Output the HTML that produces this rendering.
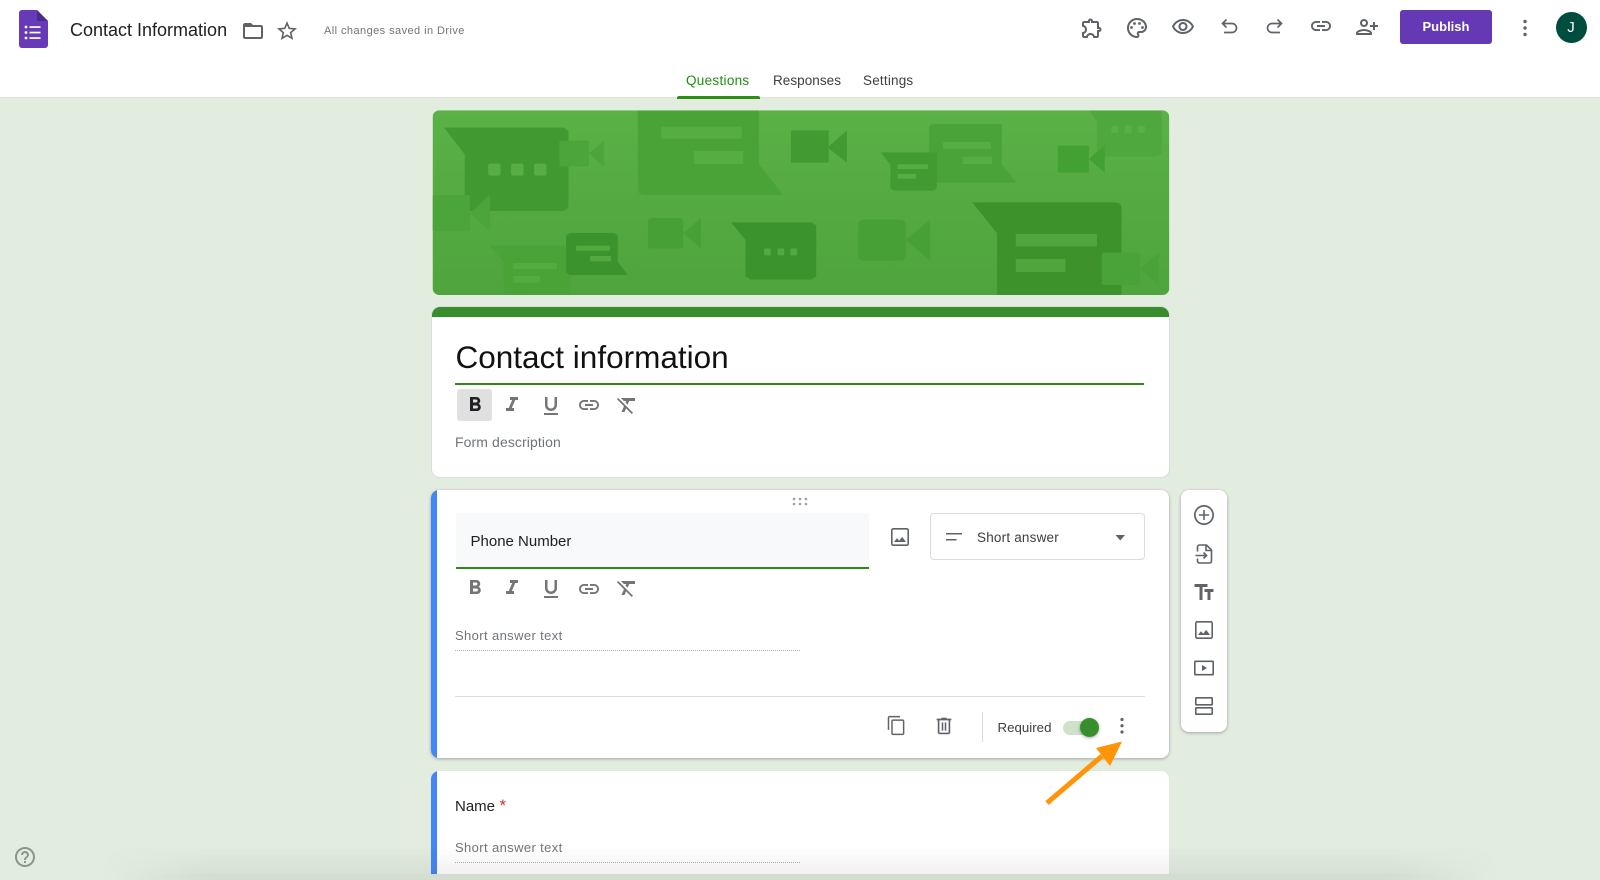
<!DOCTYPE html>
<html><head><meta charset="utf-8"><title>Contact Information</title>
<style>
html,body{margin:0;padding:0;width:1600px;height:880px;overflow:hidden}
body{background:#e2ede0;font-family:"Liberation Sans",sans-serif;color:#202124}
#p{position:relative;width:1600px;height:880px;overflow:hidden;background:#e2ede0}
.a{position:absolute}
.t{position:absolute;white-space:nowrap;line-height:20px}
svg.i{position:absolute;width:24px;height:24px;fill:#5f6368}
svg.g{fill:#757575}
svg.s{fill:none;stroke:#5f6368;stroke-width:1.6}
.card{position:absolute;background:#fff;border-radius:8px;box-sizing:border-box}
</style></head>
<body><div id="p">
<!-- header -->
<div class="a" style="left:0;top:0;width:1600px;height:98px;background:#fff;border-bottom:1px solid #dde3dc;box-sizing:border-box"></div>
<svg class="a" style="left:19px;top:10px" width="29" height="38" viewBox="0 0 29 38"><path d="M3 0H18L29 11V35a3 3 0 0 1-3 3H3a3 3 0 0 1-3-3V3a3 3 0 0 1 3-3z" fill="#673ab7"/><path d="M18 0L29 11H18z" fill="#4b2a8f"/><g fill="#fff"><circle cx="7" cy="17" r="1.4"/><circle cx="7" cy="22.5" r="1.4"/><circle cx="7" cy="28" r="1.4"/><rect x="10.5" y="16.200" width="11" height="1.700"/><rect x="10.5" y="21.700" width="11" height="1.700"/><rect x="10.5" y="27.200" width="11" height="1.700"/></g></svg>
<div class="t" style="left:70px;top:20px;font-size:18px;color:#202124">Contact Information</div>
<svg class="i" style="left:241px;top:19px" viewBox="0 0 24 24"><path d="M20 6h-8l-2-2H4c-1.100 0-2 .9-2 2v12c0 1.100.9 2 2 2h16c1.100 0 2-.9 2-2V8c0-1.100-.9-2-2-2zm0 12H4V8h16v10z"/></svg>
<svg class="i" style="left:275px;top:19px" viewBox="0 0 24 24"><path d="M22 9.240l-7.190-.62L12 2 9.190 8.630 2 9.240l5.460 4.730L5.820 21 12 17.270 18.180 21l-1.630-7.030L22 9.240zM12 15.400l-3.760 2.270 1-4.280-3.320-2.880 4.380-.38L12 6.100l1.710 4.040 4.380.38-3.320 2.880 1 4.280L12 15.400z"/></svg>
<div class="t" style="left:324px;top:21px;font-size:11px;letter-spacing:.43px;color:#70757a">All changes saved in Drive</div>

<svg class="i" style="left:1080px;top:16px" viewBox="0 0 24 24"><path d="M10.500 4.500c.28 0 .5.22.5.5v2h6v6h2c.28 0 .5.22.5.5s-.22.5-.5.5h-2v6h-2.120c-.68-1.750-2.390-3-4.380-3s-3.700 1.250-4.380 3H4v-2.120c1.750-.68 3-2.390 3-4.380 0-1.990-1.240-3.700-2.990-4.380L4 7h6V5c0-.28.22-.5.5-.5m0-2C9.120 2.500 8 3.620 8 5H4c-1.100 0-1.990.9-1.990 2v3.800h.29c1.490 0 2.700 1.210 2.700 2.700s-1.210 2.700-2.700 2.700H2V20c0 1.100.9 2 2 2h3.800v-.3c0-1.490 1.210-2.700 2.700-2.700s2.700 1.210 2.700 2.700v.3H17c1.100 0 2-.9 2-2v-4c1.380 0 2.500-1.120 2.500-2.500S20.380 11 19 11V7c0-1.100-.9-2-2-2h-4c0-1.380-1.120-2.500-2.500-2.500z"/></svg>
<svg class="i" style="left:1125px;top:16px" viewBox="0 0 24 24"><path d="M12 22C6.490 22 2 17.510 2 12S6.490 2 12 2s10 4.040 10 9c0 3.310-2.690 6-6 6h-1.770c-.28 0-.5.22-.5.5 0 .12.05.23.13.33.41.47.64 1.060.64 1.670 0 1.380-1.120 2.500-2.500 2.500zm0-18c-4.410 0-8 3.590-8 8s3.590 8 8 8c.28 0 .5-.22.5-.5 0-.16-.08-.28-.14-.35-.41-.46-.63-1.050-.63-1.650 0-1.380 1.120-2.500 2.500-2.500H16c2.210 0 4-1.790 4-4 0-3.860-3.590-7-8-7z"/><circle cx="6.500" cy="11.500" r="1.400"/><circle cx="9.500" cy="7.500" r="1.400"/><circle cx="14.500" cy="7.500" r="1.400"/><circle cx="17.500" cy="11.500" r="1.400"/></svg>
<svg class="i" style="left:1171px;top:15px" viewBox="0 0 24 24"><path d="M12 6c3.790 0 7.170 2.130 8.820 5.500C19.170 14.870 15.790 17 12 17s-7.170-2.130-8.820-5.500C4.830 8.130 8.210 6 12 6m0-2C7 4 2.730 7.110 1 11.500 2.730 15.890 7 19 12 19s9.270-3.110 11-7.500C21.270 7.110 17 4 12 4zm0 5c1.380 0 2.500 1.120 2.500 2.500S13.380 14 12 14s-2.500-1.120-2.500-2.500S10.620 9 12 9m0-2c-2.480 0-4.500 2.020-4.500 4.500S9.520 16 12 16s4.500-2.020 4.500-4.500S14.480 7 12 7z"/></svg>
<svg class="i" style="left:1217px;top:15px;fill:none;stroke:#5f6368;stroke-width:1.7" viewBox="0 0 24 24"><path d="M9.500 4.500L5.500 8.500l4 4M5.500 8.500H15a4.500 4.500 0 0 1 0 9H7"/></svg>
<svg class="i" style="left:1263px;top:15px;fill:none;stroke:#5f6368;stroke-width:1.7" viewBox="0 0 24 24"><path d="M14.500 4.500l4 4-4 4M18.500 8.500H9a4.500 4.500 0 0 0 0 9h8"/></svg>
<svg class="i" style="left:1309px;top:14px" viewBox="0 0 24 24"><path d="M3.900 12c0-1.710 1.390-3.100 3.100-3.100h4V7H7c-2.760 0-5 2.240-5 5s2.240 5 5 5h4v-1.900H7c-1.710 0-3.100-1.390-3.100-3.100zM8 13h8v-2H8v2zm9-6h-4v1.900h4c1.710 0 3.100 1.390 3.100 3.100s-1.390 3.100-3.100 3.100h-4V17h4c2.760 0 5-2.240 5-5s-2.240-5-5-5z"/></svg>
<svg class="i" style="left:1355px;top:15px;transform:scaleX(-1)" viewBox="0 0 24 24"><path d="M15 12c2.210 0 4-1.790 4-4s-1.790-4-4-4-4 1.790-4 4 1.790 4 4 4zm0-6c1.100 0 2 .9 2 2s-.9 2-2 2-2-.9-2-2 .9-2 2-2zm0 8c-2.670 0-8 1.340-8 4v2h16v-2c0-2.660-5.330-4-8-4zm-6 4c.22-.72 3.310-2 6-2 2.700 0 5.800 1.290 6 2H9zm-3-3v-3h3v-2H6V7H4v3H1v2h3v3h2z"/></svg>
<div class="a" style="left:1400px;top:10px;width:92px;height:34px;background:#6539b4;border-radius:3px;color:#fff;font-weight:700;font-size:13px;line-height:34px;text-align:center">Publish</div>
<svg class="a" style="left:1519px;top:18px" width="12" height="20" fill="#5f6368"><circle cx="6" cy="3.500" r="1.700"/><circle cx="6" cy="10" r="1.700"/><circle cx="6" cy="16.500" r="1.700"/></svg>
<div class="a" style="left:1555.500px;top:12px;width:31px;height:31px;border-radius:50%;background:#004d40;color:#fff;font-size:15px;line-height:31px;text-align:center">J</div>

<!-- tabs -->
<div class="t" style="left:686px;top:71px;font-size:13.500px;color:#1e8e0e;letter-spacing:.3px">Questions</div>
<div class="t" style="left:773px;top:71px;font-size:13.500px;color:#3c4043;letter-spacing:.05px">Responses</div>
<div class="t" style="left:863px;top:71px;font-size:13.500px;color:#3c4043;letter-spacing:.2px">Settings</div>
<div class="a" style="left:676.500px;top:96px;width:83px;height:2.500px;background:#2d9015;border-radius:2px 2px 0 0"></div>

<!-- banner -->
<svg class="a" style="left:425px;top:105px" width="750" height="205" viewBox="0 0 1568 615" preserveAspectRatio="none">
<defs><linearGradient id="bg" x1="0" y1="0" x2="0" y2="1"><stop offset="0" stop-color="#5ab146"/><stop offset="1" stop-color="#4fa43d"/></linearGradient><clipPath id="c"><rect x="16" y="16" width="1540" height="554" rx="14" ry="20"/></clipPath></defs>
<g clip-path="url(#c)">
<rect x="16" y="16" width="1540" height="554" fill="url(#bg)"/>
<path d="M40 68H290l10 10V308l-10 10H95l-12-10V148z" fill="#409a31"/>
<g fill="#58ad45"><rect x="132" y="176" width="26" height="36" rx="5"/><rect x="180" y="176" width="26" height="36" rx="5"/><rect x="228" y="176" width="26" height="36" rx="5"/></g>
<g fill="#4ba53a"><rect x="281" y="107" width="62" height="77" rx="4"/><path d="M343 145l31-38v77z"/><rect x="16" y="270" width="78" height="108" rx="4"/><path d="M94 324l42-54v108z"/></g>
<path d="M445 16H698V178L749 270H462q-17 0-17-17z" fill="#4aa337"/>
<g fill="#56ae43"><rect x="494" y="65" width="168" height="36"/><rect x="562" y="138" width="103" height="39"/></g>
<path d="M765 80q0-4 4-4H844V125L882 76V173L844 130V173H769q-4 0-4-4z" fill="#419b32"/>
<path d="M1054 70q0-13 13-13H1206V178L1236 233H1054z" fill="#4aa338"/>
<g fill="#56ae43"><rect x="1083" y="111" width="100" height="21"/><rect x="1124" y="155" width="61" height="22"/></g>
<path d="M953 142H1070V250l-7 7H980l-7-7V180z" fill="#419b32"/>
<g fill="#56ae43"><rect x="988" y="178" width="64" height="14"/><rect x="988" y="207" width="39" height="14"/></g>
<path d="M1388 16H1540V145l-10 10H1405V50z" fill="#4fa83d"/>
<g fill="#5ab048"><rect x="1435" y="62" width="14" height="22" rx="3"/><rect x="1463" y="62" width="14" height="22" rx="3"/><rect x="1491" y="62" width="14" height="22" rx="3"/></g>
<g fill="#43a033"><rect x="1323" y="122" width="65" height="81" rx="4"/><path d="M1388 162l33-40v81z"/></g>
<g fill="#46a036"><rect x="466" y="339" width="74" height="92" rx="9"/><path d="M540 385l37-46v92z"/><rect x="906" y="344" width="99" height="123" rx="12"/><path d="M1005 405l51-61v123z"/></g>
<path d="M640 352H808l10 10V514l-10 10H680l-10-10V405z" fill="#3b932d"/>
<g fill="#53a940"><rect x="709" y="430" width="14" height="21" rx="3"/><rect x="737" y="430" width="14" height="21" rx="3"/><rect x="764" y="430" width="14" height="21" rx="3"/></g>
<path d="M135 422H303V570H164V470z" fill="#49a337"/>
<g fill="#54ab41"><rect x="185" y="474" width="91" height="18"/><rect x="185" y="513" width="56" height="20"/></g>
<path d="M303 384H396l7 7V470L424 510H303l-8-8V392z" fill="#3b932d"/>
<g fill="#53a940"><rect x="316" y="422" width="71" height="15"/><rect x="345" y="453" width="44" height="16"/></g>
<path d="M1144 292H1440q16 0 16 16V570H1196V385z" fill="#3d922c"/>
<g fill="#50a63d"><rect x="1235" y="387" width="170" height="37"/><rect x="1235" y="462" width="104" height="39"/></g>
<g fill="#4aa338"><rect x="1415" y="443" width="80" height="97" rx="5"/><path d="M1495 491l39-48v97z"/></g>
</g></svg>

<!-- title card -->
<div class="card" style="left:431.500px;top:307px;width:737px;height:170px;overflow:hidden;box-shadow:0 0 0 1px #dadce0"><div style="height:10px;background:#388e2c"></div></div>
<div class="t" style="left:455.500px;top:338px;font-size:31.500px;line-height:38px;color:#111">Contact information</div>
<div class="a" style="left:455px;top:383px;width:689px;height:2px;background:#2a8c12"></div>
<div class="a" style="left:457px;top:389px;width:34.500px;height:32px;background:#e0e0e0;border-radius:3px"></div>
<svg class="i" style="left:462.500px;top:393px;fill:#202124" viewBox="0 0 24 24"><path d="M15.600 10.790c.97-.67 1.650-1.770 1.650-2.790 0-2.260-1.750-4-4-4H7v14h7.040c2.090 0 3.710-1.700 3.710-3.790 0-1.520-.86-2.820-2.150-3.420zM10 6.500h3c.83 0 1.500.67 1.500 1.500s-.67 1.500-1.500 1.500h-3v-3zm3.500 9H10v-3h3.500c.83 0 1.500.67 1.500 1.500s-.67 1.500-1.500 1.500z"/></svg>
<svg class="i g" style="left:500px;top:393px" viewBox="0 0 24 24"><path d="M10 4v3h2.210l-3.420 8H6v3h8v-3h-2.210l3.420-8H18V4z"/></svg>
<svg class="i g" style="left:539px;top:393.500px" viewBox="0 0 24 24"><path d="M12 17c3.310 0 6-2.690 6-6V3h-2.500v8c0 1.930-1.570 3.500-3.500 3.500S8.500 12.930 8.500 11V3H6v8c0 3.310 2.690 6 6 6zm-7 2v2h14v-2H5z"/></svg>
<svg class="i g" style="left:577px;top:393px" viewBox="0 0 24 24"><path d="M3.900 12c0-1.710 1.390-3.100 3.100-3.100h4V7H7c-2.760 0-5 2.240-5 5s2.240 5 5 5h4v-1.900H7c-1.710 0-3.100-1.390-3.100-3.100zM8 13h8v-2H8v2zm9-6h-4v1.900h4c1.710 0 3.100 1.390 3.100 3.100s-1.390 3.100-3.100 3.100h-4V17h4c2.760 0 5-2.240 5-5s-2.240-5-5-5z"/></svg>
<svg class="i g" style="left:615px;top:393px" viewBox="0 0 24 24"><path d="M3.270 5L2 6.270l6.970 6.970L6.500 19h3l1.570-3.660L16.730 21 18 19.730 3.550 5.270 3.270 5zM6 5v.18L8.820 8h2.400l-.72 1.680 2.100 2.100L14.210 8H20V5H6z"/></svg>
<div class="t" style="left:455px;top:432px;font-size:14px;letter-spacing:.1px;color:#70757a">Form description</div>

<!-- question card -->
<div class="card" style="left:431px;top:490px;width:737.500px;height:268px;overflow:hidden;box-shadow:0 1px 3px 0 rgba(60,64,67,.4),0 0 0 1px #e4e7e4"><div style="width:6px;height:100%;background:#4285f4"></div></div>
<svg class="a" style="left:792px;top:497px" width="16" height="9" fill="#9aa0a6"><circle cx="2" cy="2" r="1.300"/><circle cx="8" cy="2" r="1.300"/><circle cx="14" cy="2" r="1.300"/><circle cx="2" cy="7" r="1.300"/><circle cx="8" cy="7" r="1.300"/><circle cx="14" cy="7" r="1.300"/></svg>
<div class="a" style="left:455.500px;top:513px;width:413.500px;height:54px;background:#f8f9fa;border-bottom:2px solid #2a8c12"></div>
<div class="t" style="left:470.500px;top:532px;font-size:15px;color:#202124">Phone Number</div>
<svg class="i g" style="left:462.500px;top:576px" viewBox="0 0 24 24"><path d="M15.600 10.790c.97-.67 1.650-1.770 1.650-2.790 0-2.260-1.750-4-4-4H7v14h7.040c2.090 0 3.710-1.700 3.710-3.790 0-1.520-.86-2.820-2.150-3.420zM10 6.500h3c.83 0 1.500.67 1.500 1.500s-.67 1.500-1.500 1.500h-3v-3zm3.500 9H10v-3h3.500c.83 0 1.500.67 1.500 1.500s-.67 1.500-1.500 1.500z"/></svg>
<svg class="i g" style="left:500px;top:576px" viewBox="0 0 24 24"><path d="M10 4v3h2.210l-3.420 8H6v3h8v-3h-2.210l3.420-8H18V4z"/></svg>
<svg class="i g" style="left:539px;top:576.500px" viewBox="0 0 24 24"><path d="M12 17c3.310 0 6-2.690 6-6V3h-2.500v8c0 1.930-1.570 3.500-3.500 3.500S8.500 12.930 8.500 11V3H6v8c0 3.310 2.690 6 6 6zm-7 2v2h14v-2H5z"/></svg>
<svg class="i g" style="left:577px;top:577px" viewBox="0 0 24 24"><path d="M3.900 12c0-1.710 1.390-3.100 3.100-3.100h4V7H7c-2.760 0-5 2.240-5 5s2.240 5 5 5h4v-1.900H7c-1.710 0-3.100-1.390-3.100-3.100zM8 13h8v-2H8v2zm9-6h-4v1.900h4c1.710 0 3.100 1.390 3.100 3.100s-1.390 3.100-3.100 3.100h-4V17h4c2.760 0 5-2.240 5-5s-2.240-5-5-5z"/></svg>
<svg class="i g" style="left:615px;top:576px" viewBox="0 0 24 24"><path d="M3.270 5L2 6.270l6.970 6.970L6.500 19h3l1.570-3.660L16.730 21 18 19.730 3.550 5.270 3.270 5zM6 5v.18L8.820 8h2.400l-.72 1.680 2.100 2.100L14.210 8H20V5H6z"/></svg>
<div class="t" style="left:455px;top:626px;font-size:13px;letter-spacing:.38px;color:#70757a">Short answer text</div>
<div class="a" style="left:455px;top:649.500px;width:345px;border-top:1px dotted #aab0b5"></div>

<svg class="i s" style="left:887.500px;top:524.500px" viewBox="0 0 24 24"><rect x="3.800" y="3.800" width="16.400" height="16.400" rx="1.500"/><path d="M14.140 11.860l-3 3.870L9 13.140 6 17h12z" fill="#5f6368" stroke="none"/></svg>
<div class="a" style="left:930px;top:513px;width:214.500px;height:47px;border:1px solid #dadce0;border-radius:4px;box-sizing:border-box"></div>
<svg class="a" style="left:946px;top:532px" width="17" height="10" fill="#5f6368"><rect x="0" y="1" width="16" height="1.500"/><rect x="0" y="7" width="10.500" height="1.500"/></svg>
<div class="t" style="left:977px;top:528px;font-size:13.500px;letter-spacing:.2px;color:#3c4043">Short answer</div>
<svg class="a" style="left:1115px;top:535px" width="11" height="6" fill="#5f6368"><path d="M.5 0h9.500L5.250 5.500z"/></svg>
<div class="a" style="left:455px;top:696px;width:689.500px;height:1px;background:#dadce0"></div>
<svg class="a s" style="left:886px;top:715px;width:21px;height:21px;fill:#5f6368;stroke:none" viewBox="0 0 24 24"><path d="M16 1H4c-1.100 0-2 .9-2 2v14h1.700V2.700H16V1zm3 4H8c-1.100 0-2 .9-2 2v14c0 1.100.9 2 2 2h11c1.100 0 2-.9 2-2V7c0-1.100-.9-2-2-2zm.3 16.300H7.700V6.700h11.600v14.600z"/></svg>
<svg class="a" style="left:933px;top:715px;width:22px;height:22px;fill:#5f6368" viewBox="0 0 24 24"><path d="M15 4V3H9v1H4v1.800h1.200V19c0 1.100.9 2 2 2h9.600c1.100 0 2-.9 2-2V5.800H20V4h-5zm2 15.200H7V5.800h10v13.400z"/><path d="M9.500 8h1.700v9H9.500zM12.800 8h1.700v9h-1.700z"/></svg>
<div class="a" style="left:981.500px;top:712px;width:1px;height:30px;background:#dadce0"></div>
<div class="t" style="left:997.500px;top:718px;font-size:13.300px;color:#3c4043">Required</div>
<div class="a" style="left:1063px;top:721px;width:30px;height:14px;border-radius:7px;background:#cde2c9"></div>
<div class="a" style="left:1079.500px;top:717.500px;width:19px;height:19px;border-radius:50%;background:#388e2c;box-shadow:0 1px 3px rgba(0,0,0,.35)"></div>
<svg class="a" style="left:1116px;top:716px" width="12" height="19" fill="#5f6368"><circle cx="6" cy="3.500" r="1.600"/><circle cx="6" cy="9.700" r="1.600"/><circle cx="6" cy="16" r="1.600"/></svg>

<!-- side toolbar -->
<div class="card" style="left:1181px;top:490px;width:46px;height:242px;box-shadow:0 1px 3px 0 rgba(60,64,67,.4),0 0 0 1px #e4e7e4"></div>
<svg class="i" style="left:1192px;top:503px" viewBox="0 0 24 24"><path d="M12.800 7h-1.600v4.200H7v1.600h4.200V17h1.600v-4.200H17v-1.600h-4.200V7zM12 2C6.480 2 2 6.480 2 12s4.480 10 10 10 10-4.480 10-10S17.520 2 12 2zm0 18.300c-4.580 0-8.300-3.720-8.300-8.300S7.420 3.700 12 3.700s8.300 3.720 8.300 8.300-3.720 8.300-8.300 8.300z"/></svg>
<svg class="i s" style="left:1192px;top:541.500px" viewBox="0 0 24 24"><path d="M5.500 9.500V5a2 2 0 0 1 2-2h7L19.500 8v11a2 2 0 0 1-2 2h-10a2 2 0 0 1-2-2v-2.500"/><path d="M14 3v5.500h5.500M3.500 13.500h11M11.500 10.500l3 3-3 3"/></svg>
<svg class="i" style="left:1192px;top:580px" viewBox="0 0 24 24"><path d="M2.500 4v3h5v13h3V7h5V4h-13zm19 5h-9v3h3v8h3v-8h3V9z"/></svg>
<svg class="i s" style="left:1192px;top:618px" viewBox="0 0 24 24"><rect x="3.800" y="3.800" width="16.400" height="16.400" rx="1.500"/><path d="M14.140 11.860l-3 3.870L9 13.140 6 17h12z" fill="#5f6368" stroke="none"/></svg>
<svg class="i s" style="left:1192px;top:656px" viewBox="0 0 24 24"><rect x="2.800" y="5.300" width="18.400" height="13.400" rx=".6"/><path d="M10 9v6l5-3z" fill="#5f6368" stroke="none"/></svg>
<svg class="i s" style="left:1192px;top:694px" viewBox="0 0 24 24"><rect x="3.800" y="3.800" width="16.400" height="7" rx=".6"/><rect x="3.800" y="13.800" width="16.400" height="6.400" rx=".6"/></svg>

<!-- name card -->
<div class="card" style="left:431px;top:771px;width:737.500px;height:103px;border-radius:8px 8px 0 0;overflow:hidden;box-shadow:0 0 0 1px #e4e7e4"><div style="width:6px;height:100%;background:#4285f4"></div></div>
<div class="t" style="left:455px;top:797px;font-size:15px;color:#202124">Name</div>
<div class="t" style="left:499.500px;top:796px;font-size:17px;color:#d93025">*</div>
<div class="t" style="left:455px;top:838px;font-size:13px;letter-spacing:.38px;color:#70757a">Short answer text</div>
<div class="a" style="left:455px;top:861.500px;width:345px;border-top:1px dotted #aab0b5"></div>

<!-- bottom fade -->
<div class="a" style="left:100px;top:845px;width:1400px;height:35px;background:linear-gradient(to bottom,rgba(60,70,60,0),rgba(60,70,60,.07) 82%,rgba(60,70,60,.085) 83%,rgba(60,70,60,.085));-webkit-mask-image:linear-gradient(to right,transparent,#000 8%,#000 92%,transparent);mask-image:linear-gradient(to right,transparent,#000 8%,#000 92%,transparent)"></div>

<!-- help -->
<svg class="i" style="left:13px;top:845px;fill:#8a968a" viewBox="0 0 24 24"><path d="M11 18h2v-2h-2v2zm1-16C6.480 2 2 6.480 2 12s4.480 10 10 10 10-4.480 10-10S17.520 2 12 2zm0 18c-4.410 0-8-3.590-8-8s3.590-8 8-8 8 3.590 8 8-3.590 8-8 8zm0-14c-2.210 0-4 1.790-4 4h2c0-1.100.9-2 2-2s2 .9 2 2c0 2-3 1.750-3 5h2c0-2.250 3-2.500 3-5 0-2.210-1.790-4-4-4z"/></svg>

<!-- arrow -->
<svg class="a" style="left:1040px;top:735px" width="90" height="75"><path d="M7 68L62 21" stroke="#ff9406" stroke-width="5" fill="none"/><path d="M82 6.500L56 13L70 31z" fill="#ff9406"/></svg>
</div></body></html>
